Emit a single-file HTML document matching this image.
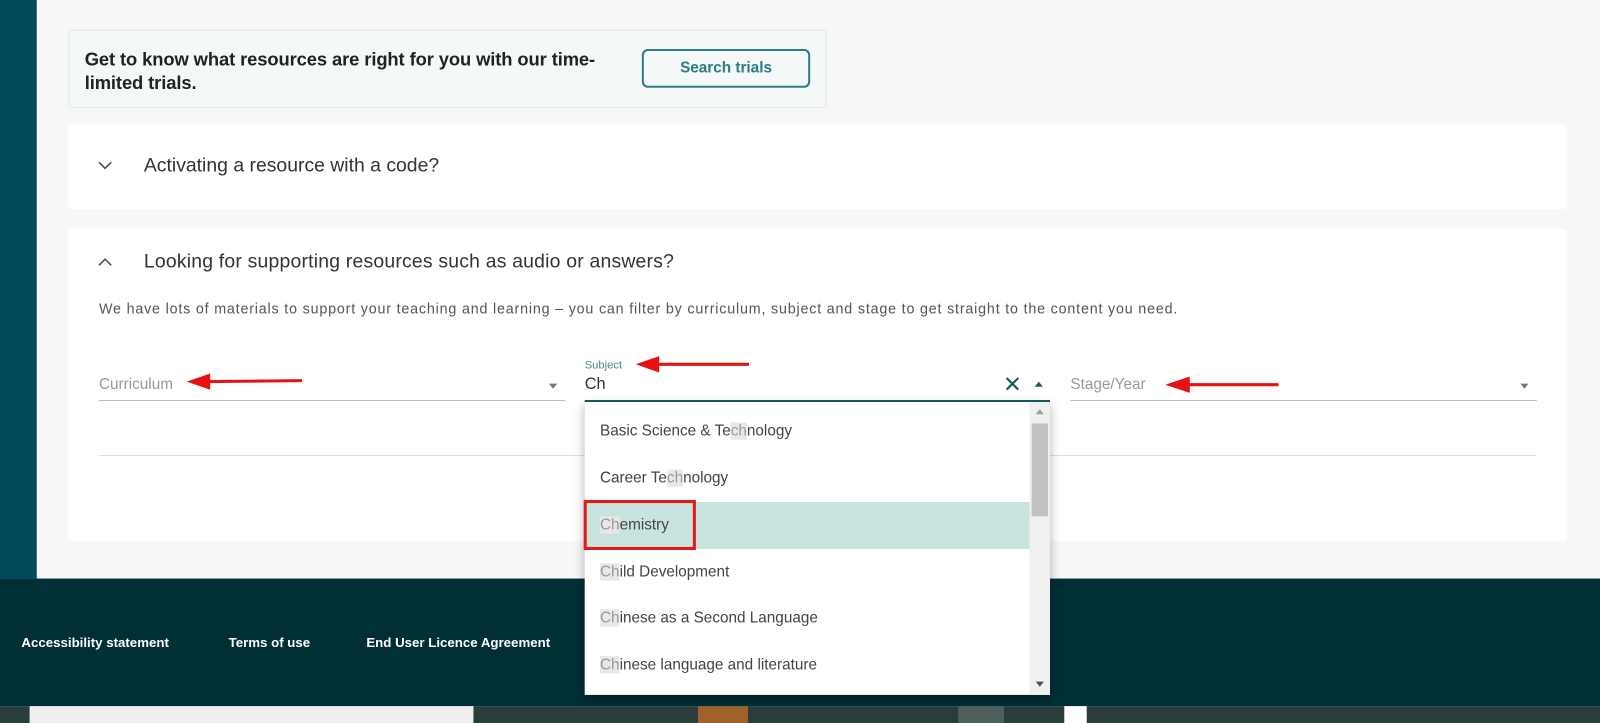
<!DOCTYPE html>
<html><head><style>
*{margin:0;padding:0;box-sizing:border-box}
body{width:1600px;height:709px;overflow:hidden;background:#f7f7f7;font-family:"Liberation Sans",sans-serif;color:#333;position:relative}
#w{position:absolute;left:0;top:0;width:1568px;height:695px;transform:scale(1.0204);transform-origin:0 0}
.a{position:absolute}
.card{position:absolute;left:67px;width:1469px;background:#fff;border-radius:4px}
.it{position:absolute;left:0;width:436px;height:46px;font-size:15px;color:#444;padding-left:15px;line-height:46px}
.hl{background:#e8e8e8;color:#999}
</style></head><body><div id="w">
<div class="a" style="left:0;top:0;width:36px;height:567px;background:#004b5a"></div>
<div class="a" style="left:67px;top:29px;width:743px;height:77px;background:#f4f8f9;border:1px solid #e1e7ea;border-radius:3px"></div>
<div class="a" style="left:83px;top:47px;font-size:18px;line-height:23px;color:#222;font-weight:bold;letter-spacing:-0.1px;width:540px">Get to know what resources are right for you with our time-limited trials.</div>
<div class="a" style="left:629px;top:48px;width:165px;height:38px;border:2px solid #2d7d83;border-radius:6px;color:#2d7d83;font-weight:bold;font-size:15px;text-align:center;line-height:34px">Search trials</div>
<div class="card" style="top:122px;height:83px"></div>
<svg class="a" style="left:96px;top:157px" width="14" height="10"><path d="M1 2l6 6 6-6" stroke="#555" stroke-width="1.6" fill="none"/></svg>
<div class="a" style="left:141px;top:152px;font-size:19px;color:#333">Activating a resource with a code?</div>
<div class="card" style="top:224px;height:306px"></div>
<svg class="a" style="left:96px;top:252px" width="14" height="10"><path d="M1 8l6-6 6 6" stroke="#555" stroke-width="1.6" fill="none"/></svg>
<div class="a" style="left:141px;top:246px;font-size:19px;color:#333;letter-spacing:0.2px">Looking for supporting resources such as audio or answers?</div>
<div class="a" style="left:97px;top:294px;font-size:14px;color:#555;letter-spacing:0.8px;white-space:nowrap">We have lots of materials to support your teaching and learning – you can filter by curriculum, subject and stage to get straight to the content you need.</div>
<div class="a" style="left:97px;top:368px;font-size:15px;color:#999">Curriculum</div>
<div class="a" style="left:97px;top:392px;width:457px;height:1px;background:#bbb"></div>
<div class="a" style="left:538px;top:376px;border:4px solid transparent;border-top:5px solid #777"></div>
<div class="a" style="left:97px;top:446px;width:1409px;height:1px;background:#ddd"></div>
<div class="a" style="left:573px;top:352px;font-size:11px;color:#4a8a90">Subject</div>
<div class="a" style="left:573px;top:368px;font-size:16px;color:#333">Ch</div>
<div class="a" style="left:983px;top:366px;font-size:22px;color:#1b5b62;line-height:22px">✕</div>
<div class="a" style="left:1014px;top:370px;border:4px solid transparent;border-bottom:5px solid #1b5b62"></div>
<div class="a" style="left:573px;top:392px;width:456px;height:2px;background:#1b5b62"></div>
<div class="a" style="left:1049px;top:368px;font-size:15px;color:#999">Stage/Year</div>
<div class="a" style="left:1049px;top:392px;width:457px;height:1px;background:#bbb"></div>
<div class="a" style="left:1490px;top:376px;border:4px solid transparent;border-top:5px solid #777"></div>
<div class="a" style="left:0;top:567px;width:1600px;height:125px;background:#002f36"></div>
<div class="a" style="left:21px;top:622px;font-size:13px;color:#fff;font-weight:bold">Accessibility statement</div>
<div class="a" style="left:224px;top:622px;font-size:13px;color:#fff;font-weight:bold">Terms of use</div>
<div class="a" style="left:359px;top:622px;font-size:13px;color:#fff;font-weight:bold">End User Licence Agreement</div>
<div class="a" style="left:0;top:692px;width:1600px;height:17px;background:#2a3d3d"></div>
<div class="a" style="left:29px;top:692px;width:435px;height:17px;background:#eee"></div>
<div class="a" style="left:684px;top:692px;width:49px;height:17px;background:#a0622a"></div>
<div class="a" style="left:939px;top:692px;width:45px;height:17px;background:#4e5f5e"></div>
<div class="a" style="left:1043px;top:692px;width:22px;height:17px;background:#fff"></div>
<div class="a" style="left:573px;top:394px;width:456px;height:287px;background:#fff;box-shadow:0 4px 10px rgba(0,0,0,.3);overflow:hidden">
<div class="it" style="top:6px">Basic Science &amp; Te<span class="hl">ch</span>nology</div>
<div class="it" style="top:52px">Career Te<span class="hl">ch</span>nology</div>
<div class="it" style="top:98px;background:#c9e4df;height:46px"><span class="hl">Ch</span>emistry</div>
<div class="it" style="top:144px"><span class="hl">Ch</span>ild Development</div>
<div class="it" style="top:189px"><span class="hl">Ch</span>inese as a Second Language</div>
<div class="it" style="top:235px"><span class="hl">Ch</span>inese language and literature</div>
<div class="a" style="left:436px;top:0;width:20px;height:287px;background:#f0f0f0"></div>
<div class="a" style="left:438px;top:21px;width:16px;height:91px;background:#c1c1c1"></div>
<div class="a" style="left:442px;top:7px;border:4px solid transparent;border-bottom:5px solid #a0a0a0;border-top:0"></div>
<div class="a" style="left:442px;top:274px;border:4px solid transparent;border-top:5px solid #505050;border-bottom:0"></div>
</div>
<div class="a" style="left:572px;top:490px;width:110px;height:49px;border:3px solid #e21a1a"></div>
<svg class="a" style="left:0;top:0" width="1600" height="709">
<g fill="#e81010" stroke="#e81010" stroke-width="3">
<line x1="200" y1="374" x2="296" y2="373"/><polygon points="183,374 206,366 206,382" stroke="none"/>
<line x1="640" y1="357" x2="734" y2="357"/><polygon points="623,357 646,349 646,365" stroke="none"/>
<line x1="1160" y1="377" x2="1253" y2="377"/><polygon points="1142,377 1166,369 1166,385" stroke="none"/>
</g></svg>
</div></body></html>
